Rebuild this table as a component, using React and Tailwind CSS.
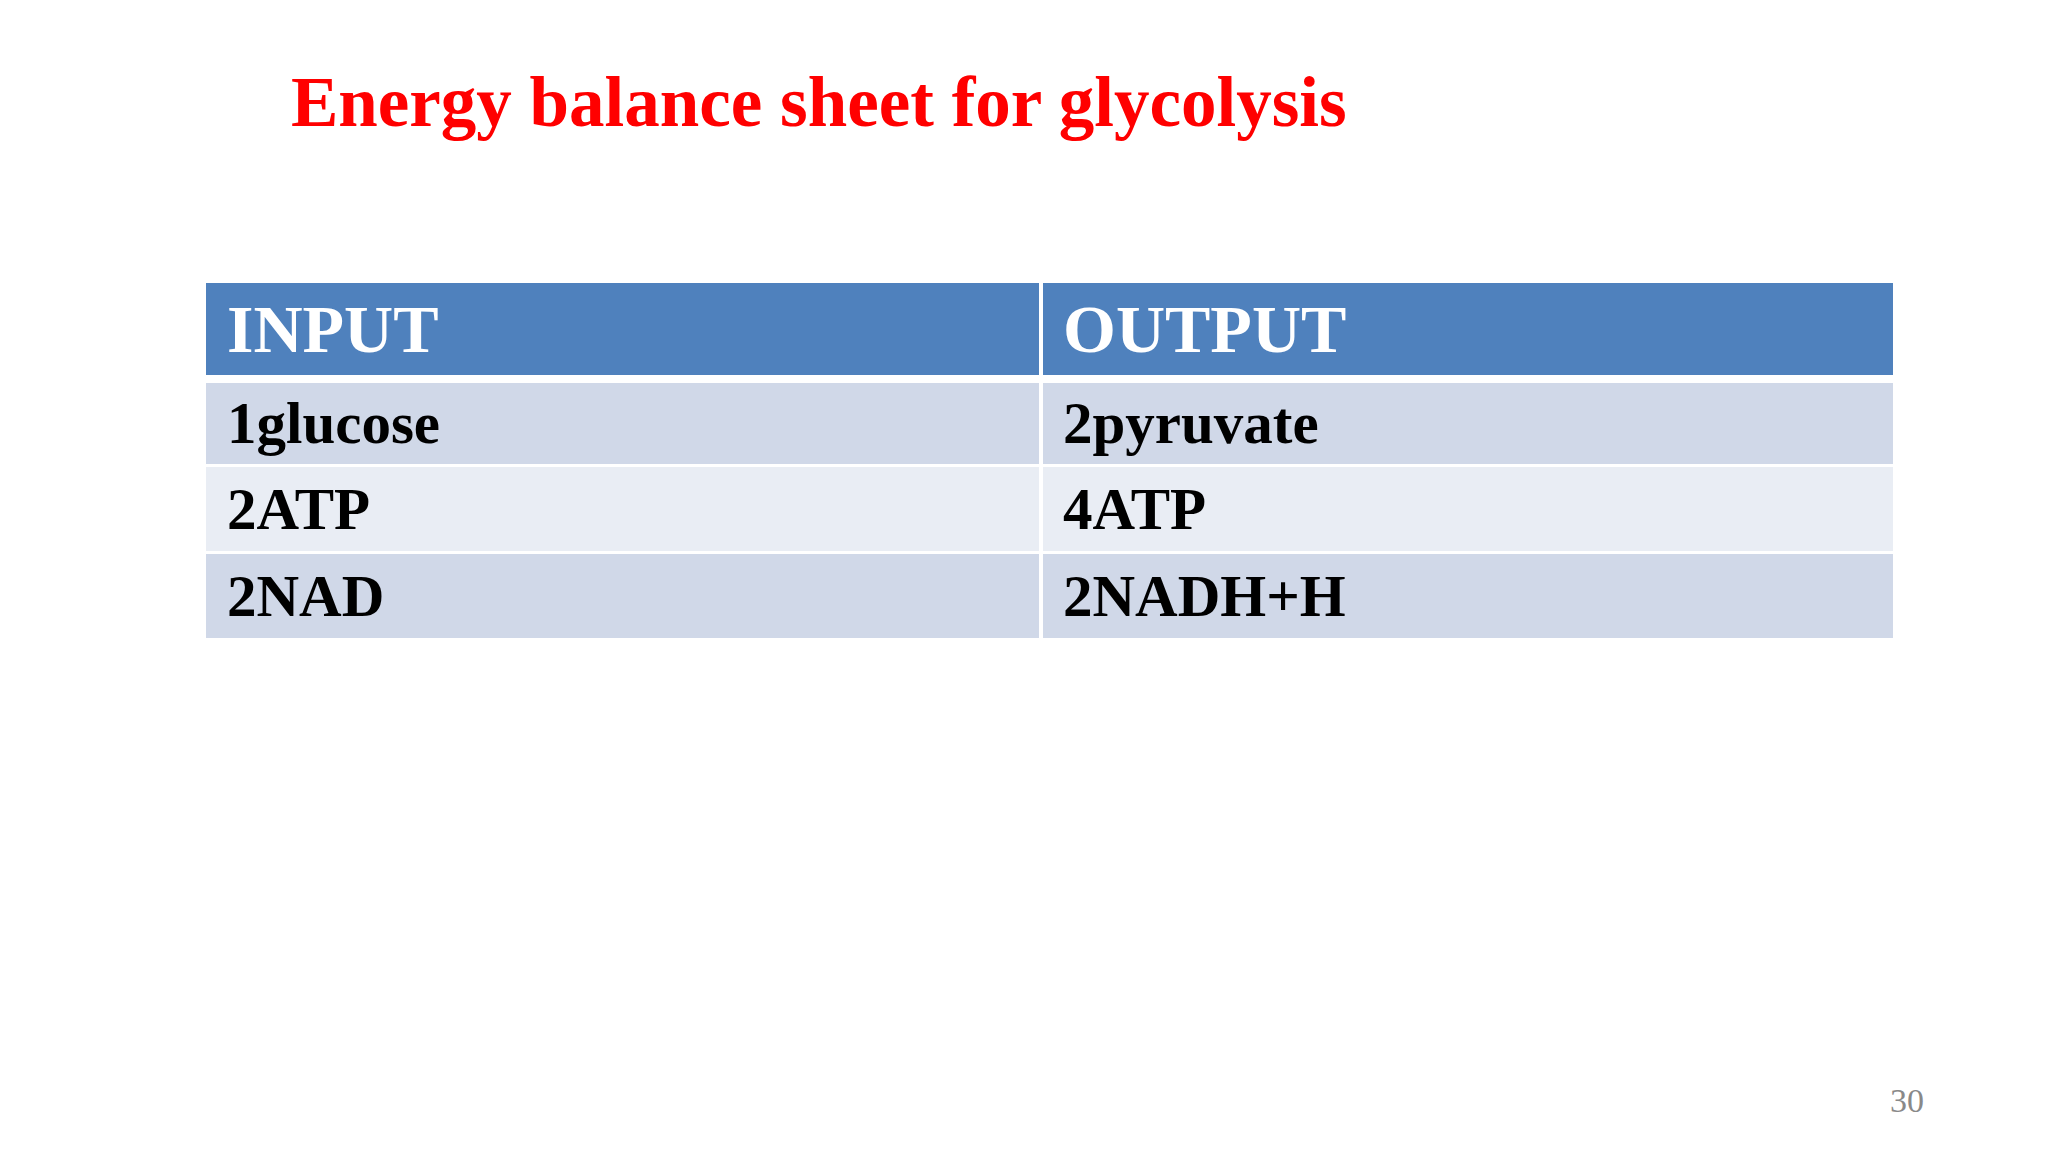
export default function App() {
  const rows = [
    { input: "1glucose", output: "2pyruvate", bg: "bg-[#d0d8e8]", h: "h-[81px]" },
    { input: "2ATP", output: "4ATP", bg: "bg-[#e9edf4]", h: "h-[84px]" },
    { input: "2NAD", output: "2NADH+H", bg: "bg-[#d0d8e8]", h: "h-[84px]" },
  ];

  return (
    <div className="w-[2048px] h-[1152px] bg-white flex flex-col font-['Liberation_Serif','Times_New_Roman',serif] overflow-hidden">
      {/* Title */}
      <h1 className="pl-[291px] pt-[67px] text-[71px] leading-none font-bold text-[#ff0000] whitespace-nowrap">
        Energy balance sheet for glycolysis
      </h1>

      {/* Balance table */}
      <div className="ml-[206px] mt-[145px] w-[1687px] flex flex-col">
        <div className="h-[92px] flex gap-[4px]">
          <div className="w-[833px] bg-[#4f81bd] flex items-center pl-[21px] text-[68px] leading-none font-bold text-white">
            INPUT
          </div>
          <div className="flex-1 bg-[#4f81bd] flex items-center pl-[20px] text-[68px] leading-none font-bold text-white">
            OUTPUT
          </div>
        </div>
        <div className="flex flex-col gap-[3px] mt-[8px]">
          {rows.map((r) => (
            <div key={r.input} className={`${r.h} flex gap-[4px]`}>
              <div className={`w-[833px] ${r.bg} flex items-center pl-[21px] text-[59px] leading-none font-bold text-black`}>
                {r.input}
              </div>
              <div className={`flex-1 ${r.bg} flex items-center pl-[20px] text-[59px] leading-none font-bold text-black`}>
                {r.output}
              </div>
            </div>
          ))}
        </div>
      </div>

      {/* Slide number */}
      <div className="mt-auto flex justify-end pr-[124px] pb-[34px]">
        <span className="text-[34px] leading-none text-[#898989]">30</span>
      </div>
    </div>
  );
}
